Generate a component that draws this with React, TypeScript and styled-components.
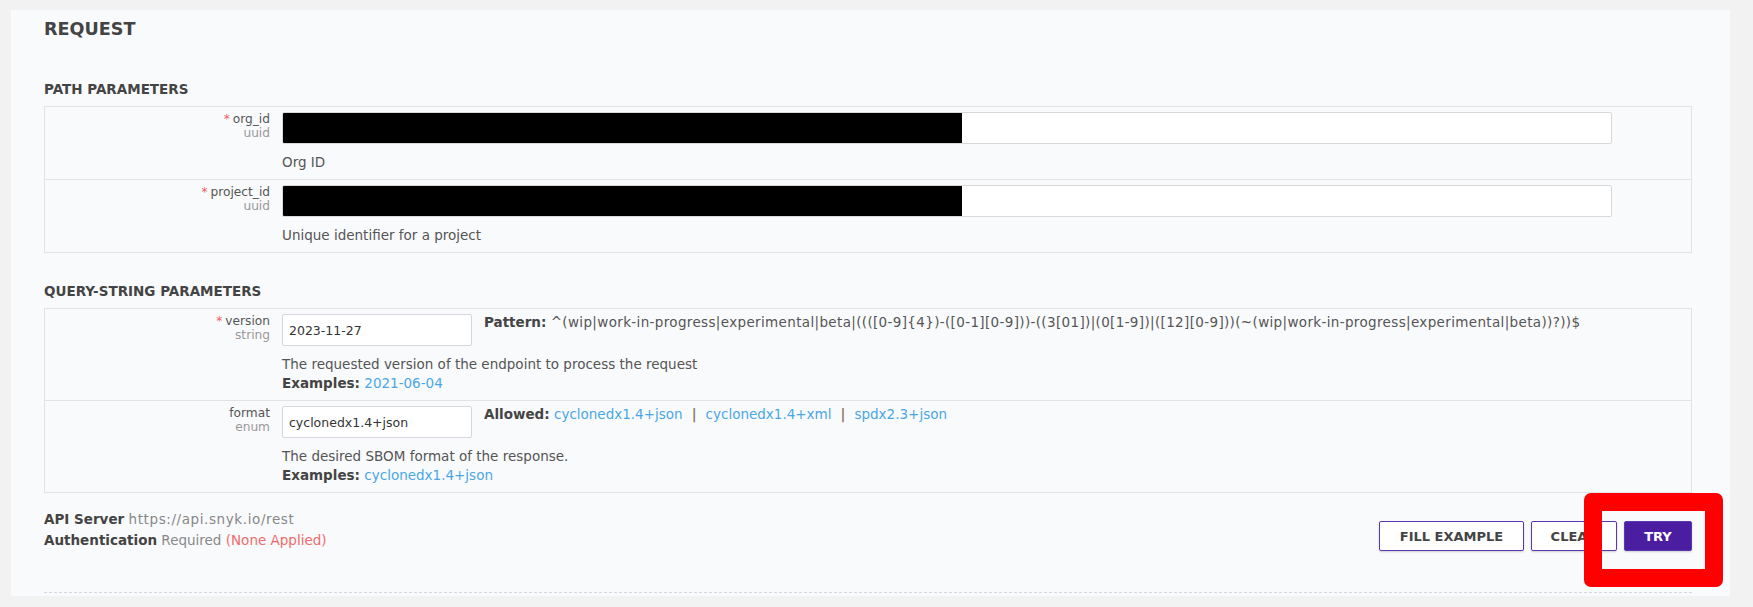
import React from "react";
import styled, { createGlobalStyle } from "styled-components";

const GlobalStyle = createGlobalStyle`
  html, body { margin: 0; padding: 0; }
  body {
    background: #f2f2f2;
    font-family: "DejaVu Sans", "Noto Sans", sans-serif;
    color: #444;
  }
  * { box-sizing: border-box; }
`;

const Page = styled.div`
  padding: 10px 23px 14px 11px;
`;

const Panel = styled.section`
  position: relative;
  background: #f9fafc;
  padding: 0 38px 3px 33px;
  display: flex;
  flex-direction: column;
`;

const Title = styled.h2`
  margin: 9px 0 0;
  font-size: 17.6px;
  line-height: 20px;
  font-weight: 700;
  color: #444;
`;

const SectionHeader = styled.h3<{ $top: number }>`
  margin: ${(p) => p.$top}px 0 0;
  font-size: 13.5px;
  line-height: 16px;
  font-weight: 700;
  color: #444;
  text-transform: uppercase;
`;

const Table = styled.div`
  margin-top: 9px;
  border: 1px solid #e1e3e6;
  display: flex;
  flex-direction: column;
`;

const Row = styled.div`
  display: flex;
  align-items: flex-start;
  padding: 5px 0 7px;
  & + & {
    border-top: 1px solid #e1e3e6;
  }
`;

const LabelCell = styled.div`
  width: 225px;
  flex: none;
  text-align: right;
  font-size: 12.2px;
  line-height: 14px;
  color: #555;
`;

const Required = styled.span`
  color: #f0606a;
  margin-right: 3px;
`;

const TypeText = styled.div`
  color: #999;
`;

const ContentCell = styled.div`
  flex: 1;
  margin-left: 12px;
  display: flex;
  flex-direction: column;
`;

const InputLine = styled.div`
  display: flex;
  align-items: flex-start;
`;

const InputBox = styled.div<{ $width: number }>`
  width: ${(p) => p.$width}px;
  height: 32px;
  background: #fff;
  border: 1px solid #d6d8dc;
  border-radius: 2px;
  display: flex;
  align-items: stretch;
  font-size: 12.5px;
  color: #333;
  overflow: hidden;
`;

const Redaction = styled.div`
  width: 680px;
  background: #000;
  margin: -1px 0 -1px -1px;
`;

const InputText = styled.span`
  display: flex;
  align-items: center;
  padding-left: 6px;
`;

const SideInfo = styled.div`
  margin-left: 12px;
  margin-top: -1px;
  font-size: 13.5px;
  line-height: 18px;
  color: #555;
  white-space: nowrap;
`;

const PatternText = styled.span`
  letter-spacing: 0.35px;
`;

const Strong = styled.b`
  font-weight: 700;
  color: #444;
`;

const Link = styled.span`
  color: #4aa7e4;
`;

const Sep = styled.span`
  color: #8c7b66;
  font-weight: 700;
  margin: 0 9px;
`;

const Description = styled.div`
  margin-top: 9px;
  font-size: 13.5px;
  line-height: 19px;
  color: #555;
`;

const Footer = styled.div`
  margin-top: 16px;
  display: flex;
  justify-content: space-between;
  align-items: flex-start;
  padding-bottom: 41px;
  border-bottom: 1px dashed #d4d6da;
`;

const Info = styled.div`
  font-size: 13.5px;
  line-height: 21px;
  color: #888;
`;

const Url = styled.span`
  letter-spacing: 0.6px;
`;

const Buttons = styled.div`
  margin-top: 12px;
  display: flex;
  gap: 7px;
`;

const Button = styled.button<{ $primary?: boolean; $width: number }>`
  width: ${(p) => p.$width}px;
  height: 30px;
  padding: 0;
  font-family: inherit;
  font-size: 13px;
  font-weight: 700;
  text-transform: uppercase;
  border-radius: 2px;
  border: 1.5px solid #5a37b0;
  background: ${(p) => (p.$primary ? "#4b1ea1" : "#fff")};
  color: ${(p) => (p.$primary ? "#fff" : "#444")};
  box-shadow: 0 1px 2px rgba(0, 0, 0, 0.18);
  cursor: pointer;
`;

const Danger = styled.span`
  color: #ef6b6b;
`;

const Highlight = styled.div`
  position: absolute;
  left: 1573px;
  top: 483px;
  width: 139px;
  height: 94px;
  border: 18px solid #ff0000;
  border-radius: 7px;
  pointer-events: none;
`;

type Param = {
  name: string;
  type: string;
  required?: boolean;
};

const Label: React.FC<Param> = ({ name, type, required }) => (
  <LabelCell>
    <div>
      {required && <Required>*</Required>}
      {name}
    </div>
    <TypeText>{type}</TypeText>
  </LabelCell>
);

const pattern =
  "^(wip|work-in-progress|experimental|beta|((([0-9]{4})-([0-1][0-9]))-((3[01])|(0[1-9])|([12][0-9]))(~(wip|work-in-progress|experimental|beta))?))$";

export default function App() {
  return (
    <>
      <GlobalStyle />
      <Page>
        <Panel>
          <Title>REQUEST</Title>

          <SectionHeader $top={42}>Path Parameters</SectionHeader>
          <Table>
            <Row>
              <Label name="org_id" type="uuid" required />
              <ContentCell>
                <InputBox $width={1330}>
                  <Redaction />
                </InputBox>
                <Description>Org ID</Description>
              </ContentCell>
            </Row>
            <Row>
              <Label name="project_id" type="uuid" required />
              <ContentCell>
                <InputBox $width={1330}>
                  <Redaction />
                </InputBox>
                <Description>Unique identifier for a project</Description>
              </ContentCell>
            </Row>
          </Table>

          <SectionHeader $top={30}>Query-String Parameters</SectionHeader>
          <Table>
            <Row>
              <Label name="version" type="string" required />
              <ContentCell>
                <InputLine>
                  <InputBox $width={190}>
                    <InputText>2023-11-27</InputText>
                  </InputBox>
                  <SideInfo>
                    <Strong>Pattern:</Strong> <PatternText>{pattern}</PatternText>
                  </SideInfo>
                </InputLine>
                <Description>
                  The requested version of the endpoint to process the request
                  <div>
                    <Strong>Examples:</Strong> <Link>2021-06-04</Link>
                  </div>
                </Description>
              </ContentCell>
            </Row>
            <Row>
              <Label name="format" type="enum" />
              <ContentCell>
                <InputLine>
                  <InputBox $width={190}>
                    <InputText>cyclonedx1.4+json</InputText>
                  </InputBox>
                  <SideInfo>
                    <Strong>Allowed:</Strong> <Link>cyclonedx1.4+json</Link>
                    <Sep>|</Sep>
                    <Link>cyclonedx1.4+xml</Link>
                    <Sep>|</Sep>
                    <Link>spdx2.3+json</Link>
                  </SideInfo>
                </InputLine>
                <Description>
                  The desired SBOM format of the response.
                  <div>
                    <Strong>Examples:</Strong> <Link>cyclonedx1.4+json</Link>
                  </div>
                </Description>
              </ContentCell>
            </Row>
          </Table>

          <Footer>
            <Info>
              <div>
                <Strong>API Server</Strong> <Url>https://api.snyk.io/rest</Url>
              </div>
              <div>
                <Strong>Authentication</Strong> Required{" "}
                <Danger>(None Applied)</Danger>
              </div>
            </Info>
            <Buttons>
              <Button $width={145}>Fill Example</Button>
              <Button $width={86}>Clear</Button>
              <Button $width={68} $primary>
                Try
              </Button>
            </Buttons>
          </Footer>
          <Highlight />
        </Panel>
      </Page>
    </>
  );
}
